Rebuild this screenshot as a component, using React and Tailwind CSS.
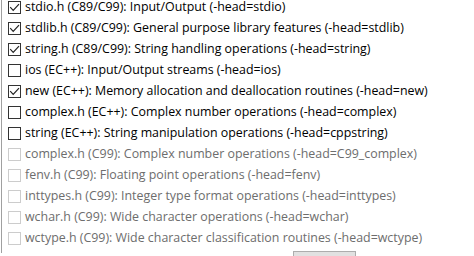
import React from "react";

const rows = [
  { t: "stdio.h (C89/C99): Input/Output (-head=stdio)", c: true, d: false },
  { t: "stdlib.h (C89/C99): General purpose library features (-head=stdlib)", c: true, d: false },
  { t: "string.h (C89/C99): String handling operations (-head=string)", c: true, d: false },
  { t: "ios (EC++): Input/Output streams (-head=ios)", c: false, d: false },
  { t: "new (EC++): Memory allocation and deallocation routines (-head=new)", c: true, d: false },
  { t: "complex.h (EC++): Complex number operations (-head=complex)", c: false, d: false },
  { t: "string (EC++): String manipulation operations (-head=cppstring)", c: false, d: false },
  { t: "complex.h (C99): Complex number operations (-head=C99_complex)", c: false, d: true },
  { t: "fenv.h (C99): Floating point operations (-head=fenv)", c: false, d: true },
  { t: "inttypes.h (C99): Integer type format operations (-head=inttypes)", c: false, d: true },
  { t: "wchar.h (C99): Wide character operations (-head=wchar)", c: false, d: true },
  { t: "wctype.h (C99): Wide character classification routines (-head=wctype)", c: false, d: true },
];

function Box({ checked, disabled }) {
  return (
    <div
      className={
        "w-[13px] h-[13px] shrink-0 border bg-white flex items-center justify-center " +
        (disabled ? "border-[#cccccc]" : "border-[#333333]")
      }
    >
      {checked && (
        <svg width="11" height="11" viewBox="0 0 11 11">
          <path d="M1.2 5.2 L4.2 8.4 L10 2.2" fill="none" stroke="#222" strokeWidth="1.2" />
        </svg>
      )}
    </div>
  );
}

export default function App() {
  return (
    <div
      className="w-[474px] h-[256px] bg-white overflow-hidden relative"
      style={{ fontFamily: '"Open Sans", sans-serif' }}
    >
      <div className="h-full border-l border-[#a0a0a0] ml-[1px] pl-[6px] flex flex-col -mt-[3px]">
        {rows.map((r, i) => (
          <div key={i} className="h-[21px] flex items-center gap-[4px] shrink-0">
            <Box checked={r.c} disabled={r.d} />
            <span
              className={
                "text-[12.4px] whitespace-nowrap leading-none " +
                (r.d ? "text-[#6d6d6d]" : "text-black")
              }
            >
              {r.t}
            </span>
          </div>
        ))}
      </div>
      <div className="absolute left-[293px] top-[251px] w-[63px] h-[22px] border border-[#adadad] bg-[#e1e1e1]" />
    </div>
  );
}
